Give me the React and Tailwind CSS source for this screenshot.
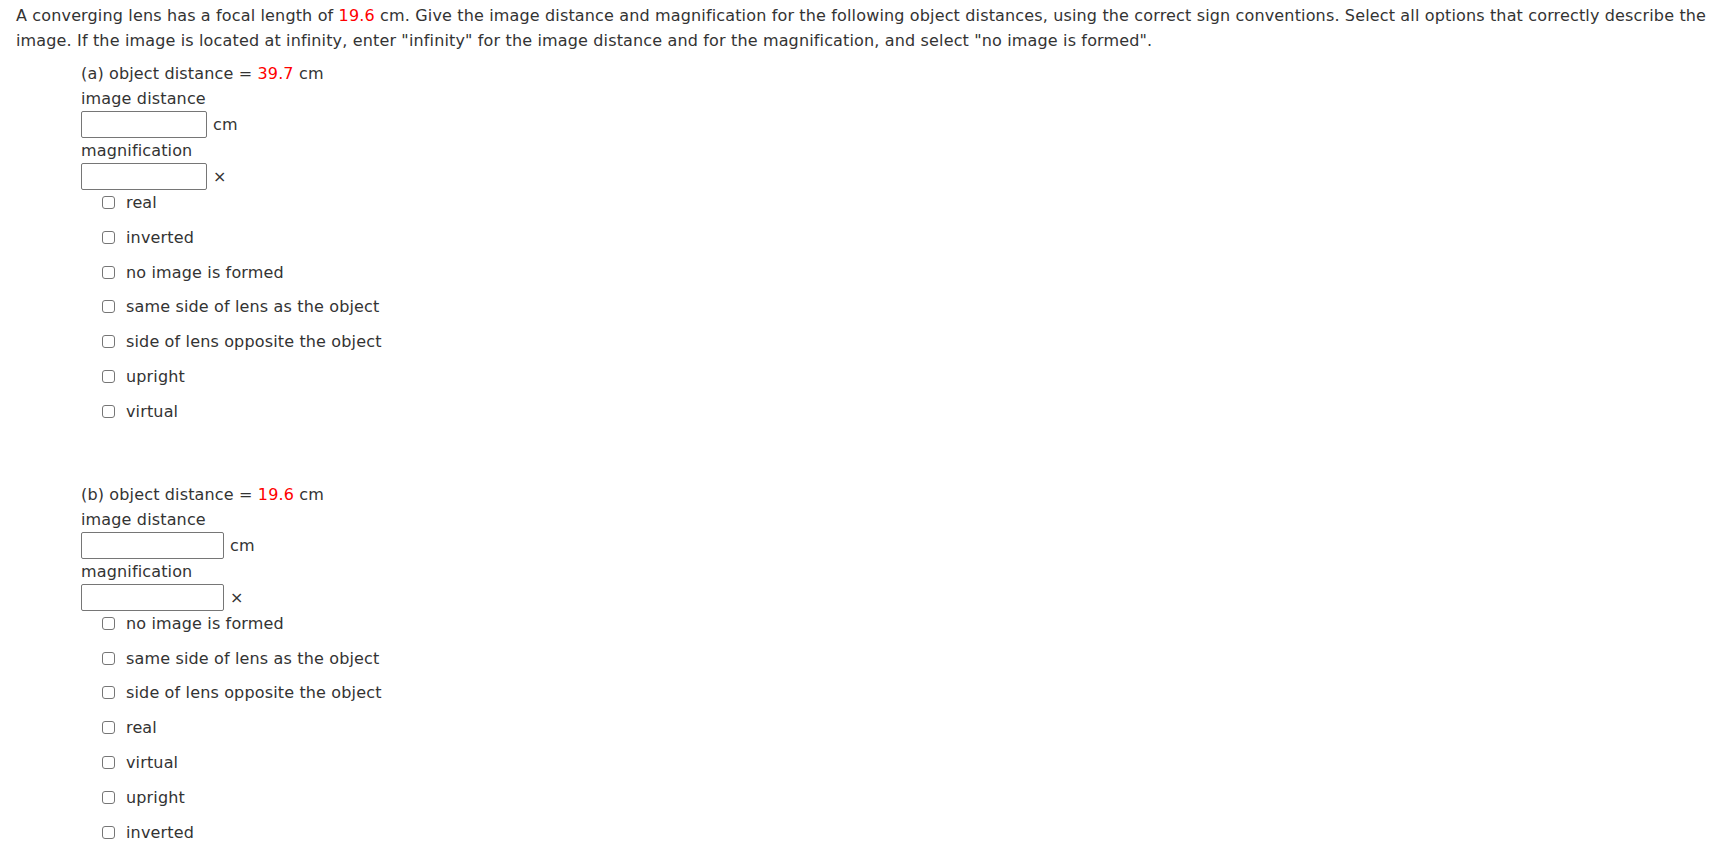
const Red = ({ children }) => <span className="text-[#ff0000]">{children}</span>;

const Field = ({ width, unit }) => (
  <div className="flex items-center h-[27px]">
    <input
      type="text"
      className={`${width} h-[27px] border border-[#767676] rounded-[2px] bg-white outline-none px-1`}
    />
    <span className="ml-[6px]">{unit}</span>
  </div>
);

const Option = ({ label }) => (
  <label className="flex items-center h-[25px] pl-[21px]">
    <span className="w-[13px] h-[13px] border border-[#767676] rounded-[3px] bg-white flex-shrink-0" />
    <span className="ml-[11px]">{label}</span>
  </label>
);

const Part = ({ letter, distance, width, options, className = "" }) => (
  <div className={`pl-[81px] ${className}`}>
    <p>
      ({letter}) object distance = <Red>{distance}</Red> cm
    </p>
    <p>image distance</p>
    <Field width={width} unit="cm" />
    <p>magnification</p>
    <Field width={width} unit="×" />
    <div className="flex flex-col gap-[9.8px]">
      {options.map((o) => (
        <Option key={o} label={o} />
      ))}
    </div>
  </div>
);

export default function App() {
  return (
    <div className="min-h-screen bg-white text-[#333333] text-[16px] leading-[25px] tracking-[0.15px] font-['Verdana','DejaVu_Sans',sans-serif] pt-[3px]">
      <p className="pl-[16px] pr-[8px]">
        A converging lens has a focal length of <Red>19.6</Red> cm. Give the image distance and
        magnification for the following object distances, using the correct sign conventions.
        Select all options that correctly describe the image. If the image is located at
        infinity, enter "infinity" for the image distance and for the magnification, and select
        "no image is formed".
      </p>
      <Part
        className="mt-[8px]"
        letter="a"
        distance="39.7"
        width="w-[126px]"
        options={[
          "real",
          "inverted",
          "no image is formed",
          "same side of lens as the object",
          "side of lens opposite the object",
          "upright",
          "virtual",
        ]}
      />
      <Part
        className="mt-[58px]"
        letter="b"
        distance="19.6"
        width="w-[143px]"
        options={[
          "no image is formed",
          "same side of lens as the object",
          "side of lens opposite the object",
          "real",
          "virtual",
          "upright",
          "inverted",
        ]}
      />
    </div>
  );
}
